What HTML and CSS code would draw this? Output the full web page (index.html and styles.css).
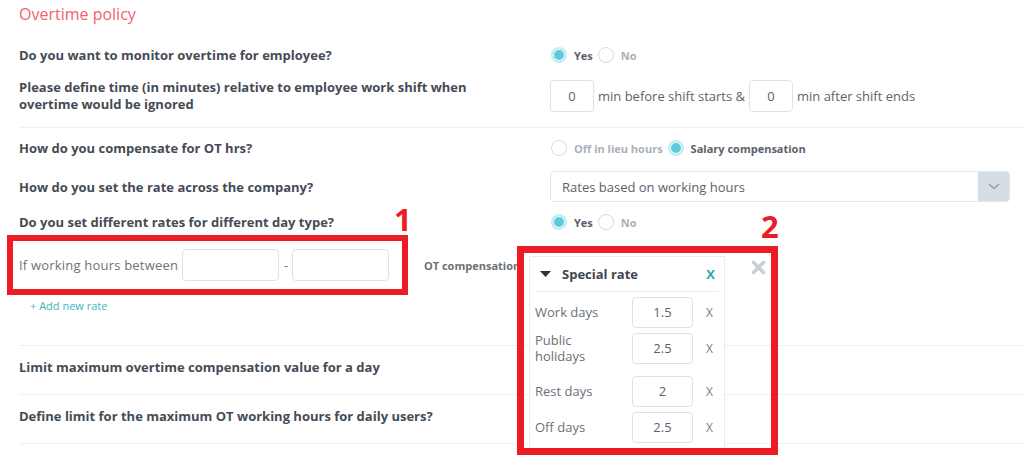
FILE: index.html
```html
<!DOCTYPE html>
<html lang="en">
<head>
  <meta charset="UTF-8" />
  <meta name="viewport" content="width=device-width, initial-scale=1.0" />
  <title>Overtime policy</title>
  <link rel="stylesheet" href="styles.css">
</head>
<body>
  <div class="policy">
    <h2 class="policy-title">Overtime policy</h2>

    <section class="block block-monitor">
      <div class="row row-monitor">
        <div class="question">Do you want to monitor overtime for employee?</div>
        <div class="answer">
          <label class="radio checked"><span class="dot"></span>Yes</label>
          <label class="radio"><span class="dot"></span>No</label>
        </div>
      </div>
      <div class="row row-ignore">
        <div class="question question-wrap">Please define time (in minutes) relative to employee work shift when overtime would be ignored</div>
        <div class="answer">
          <input class="field field-min" type="text" value="0">
          <span class="hint">min before shift starts &amp;</span>
          <input class="field field-min" type="text" value="0">
          <span class="hint">min after shift ends</span>
        </div>
      </div>
    </section>

    <section class="block block-rates">
      <div class="row row-comp">
        <div class="question">How do you compensate for OT hrs?</div>
        <div class="answer">
          <label class="radio"><span class="dot"></span>Off in lieu hours</label>
          <label class="radio checked"><span class="dot"></span>Salary compensation</label>
        </div>
      </div>
      <div class="row row-rate">
        <div class="question">How do you set the rate across the company?</div>
        <div class="answer">
          <div class="select">
            <span class="select-value">Rates based on working hours</span>
            <span class="select-btn">
              <svg width="12" height="7" viewBox="0 0 12 7"><polyline points="1,1 6,5.5 11,1" fill="none" stroke="#8f9ba5" stroke-width="1.4"/></svg>
            </span>
          </div>
        </div>
      </div>
      <div class="row row-daytype">
        <div class="question">Do you set different rates for different day type?</div>
        <div class="answer">
          <label class="radio checked"><span class="dot"></span>Yes</label>
          <label class="radio"><span class="dot"></span>No</label>
        </div>
      </div>
      <div class="hours-row">
        <span class="hours-label">If working hours between</span>
        <input class="field field-hours" type="text">
        <span class="dash">-</span>
        <input class="field field-hours" type="text">
        <span class="ot-label">OT compensation</span>
      </div>
      <a class="add-rate" href="#">+ Add new rate</a>
    </section>

    <section class="block block-line">
      <div class="question">Limit maximum overtime compensation value for a day</div>
    </section>
    <section class="block block-line">
      <div class="question">Define limit for the maximum OT working hours for daily users?</div>
    </section>

    <!-- special rate popover -->
    <div class="special">
      <div class="special-head">
        <svg class="caret" width="11" height="6" viewBox="0 0 11 6"><polygon points="0,0 11,0 5.5,6" fill="#2f3338"/></svg>
        <span class="special-title">Special rate</span>
        <span class="special-close">X</span>
      </div>
      <div class="rate-row">
        <span class="rate-label">Work days</span>
        <input class="field field-rate" type="text" value="1.5">
        <span class="rate-x">X</span>
      </div>
      <div class="rate-row two-line">
        <span class="rate-label">Public holidays</span>
        <input class="field field-rate" type="text" value="2.5">
        <span class="rate-x">X</span>
      </div>
      <div class="rate-row">
        <span class="rate-label">Rest days</span>
        <input class="field field-rate" type="text" value="2">
        <span class="rate-x">X</span>
      </div>
      <div class="rate-row">
        <span class="rate-label">Off days</span>
        <input class="field field-rate" type="text" value="2.5">
        <span class="rate-x">X</span>
      </div>
    </div>
    <svg class="remove" width="15" height="15" viewBox="0 0 15 15"><path d="M2.5 2.5 L12.5 12.5 M12.5 2.5 L2.5 12.5" stroke="#c6d0d6" stroke-width="3.6" stroke-linecap="round"/></svg>

    <!-- annotations -->
    <div class="mark mark-1"></div>
    <span class="mark-num num-1">1</span>
    <div class="mark mark-2"></div>
    <span class="mark-num num-2">2</span>
  </div>
</body>
</html>
```

FILE: styles.css
```css
body {
  margin: 0;
  height: 455px;
  overflow: hidden;
  background: #fff;
  font-family: 'Open Sans', 'DejaVu Sans', sans-serif;
  color: #454b55;
}
.policy {
  position: relative;
  padding: 0 0 0 19px;
}
.policy-title {
  margin: 0;
  padding-top: 4px;
  height: 20px;
  font-size: 16px;
  line-height: 20px;
  font-weight: 400;
  color: #f2616f;
}
.block {
  border-bottom: 1px solid #eef1f4;
}
.block-monitor {
  padding: 17px 0 14px;
}
.block-rates {
  padding: 6px 0 31px;
}
.block-line {
  padding: 13px 0 19px;
}
.row {
  display: grid;
  grid-template-columns: 531px 1fr;
  align-items: center;
  min-height: 28px;
}
.row-ignore {
  margin-top: 10px;
}
.row-rate {
  margin-top: 9px;
}
.row-daytype {
  margin-top: 6px;
}
.question {
  font-size: 13px;
  font-weight: 700;
  line-height: 16px;
  color: #454b55;
}
.question-wrap {
  max-width: 470px;
  line-height: 17px;
}
.answer {
  display: flex;
  align-items: center;
}
.radio {
  display: flex;
  align-items: center;
  font-size: 11px;
  font-weight: 700;
  color: #aab1b8;
  margin-right: 4px;
  cursor: pointer;
}
.radio.checked {
  color: #5b6169;
}
.dot {
  box-sizing: border-box;
  width: 16px;
  height: 16px;
  border-radius: 50%;
  border: 1px solid #d3dbe1;
  background: #fff;
  margin: 0 7px 0 1px;
}
.radio.checked .dot {
  border: 2px solid #c4ecf1;
  background: #5ccad8;
  box-shadow: inset 0 0 0 1px #fff;
}
.field {
  box-sizing: border-box;
  border: 1px solid #dbe2e8;
  border-radius: 4px;
  font-family: inherit;
  font-size: 13px;
  color: #5d636b;
  text-align: center;
  background: #fff;
  outline: none;
}
.field-min {
  width: 44px;
  height: 32px;
  margin-right: 4px;
}
.hint {
  font-size: 13px;
  color: #5d636b;
  margin-right: 4px;
}
.select {
  box-sizing: border-box;
  display: flex;
  align-items: center;
  width: 460px;
  height: 31px;
  border: 1px solid #e0e6eb;
  border-radius: 4px;
  overflow: hidden;
}
.select-value {
  flex: 1;
  padding-left: 11px;
  font-size: 13px;
  color: #5d636b;
}
.select-btn {
  display: flex;
  align-items: center;
  justify-content: center;
  width: 31px;
  height: 100%;
  background: #d6dee5;
}
.hours-row {
  display: flex;
  align-items: center;
  margin-top: 13px;
  height: 32px;
}
.hours-label {
  font-size: 13px;
  letter-spacing: 0.2px;
  color: #6d737b;
  margin-right: 4px;
}
.field-hours {
  width: 97px;
  height: 32px;
}
.dash {
  font-size: 12px;
  color: #6d737b;
  margin: 0 4px 0 5px;
}
.ot-label {
  margin-left: 35px;
  font-size: 11px;
  font-weight: 700;
  color: #6b7179;
}
.add-rate {
  display: block;
  margin: 17px 0 0 11px;
  font-size: 11px;
  line-height: 16px;
  color: #3fb3c4;
  text-decoration: none;
}
.special {
  position: absolute;
  left: 529px;
  top: 256px;
  box-sizing: border-box;
  width: 196px;
  height: 220px;
  padding: 0 5px;
  background: #fff;
  border: 1px solid #e8edf1;
}
.special-head {
  display: flex;
  align-items: center;
  height: 34px;
  border-bottom: 1px solid #eaeef2;
  margin-bottom: 2px;
}
.caret {
  margin: 0 11px 0 5px;
}
.special-title {
  flex: 1;
  font-size: 13px;
  font-weight: 700;
  color: #3f454e;
}
.special-close {
  margin-right: 4px;
  font-size: 13px;
  font-weight: 700;
  color: #2aa8ba;
}
.rate-row {
  display: flex;
  align-items: center;
  height: 36px;
}
.rate-row.two-line {
  margin-bottom: 7px;
}
.rate-label {
  width: 80px;
  margin-right: 17px;
  font-size: 13px;
  line-height: 16px;
  color: #6a7078;
}
.field-rate {
  width: 61px;
  height: 31px;
}
.rate-x {
  margin-left: 13px;
  font-size: 12px;
  color: #7a8088;
}
.remove {
  position: absolute;
  left: 751px;
  top: 260px;
}
.mark {
  position: absolute;
  box-sizing: border-box;
  border: 6px solid #ed1c24;
}
.mark-1 {
  left: 7px;
  top: 235px;
  width: 401px;
  height: 60px;
}
.mark-2 {
  left: 517px;
  top: 246px;
  width: 261px;
  height: 209px;
  border-width: 7px;
}
.mark-num {
  position: absolute;
  font-family: 'Open Sans', sans-serif;
  font-size: 31px;
  font-weight: 700;
  line-height: 1;
  color: #ed1c24;
}
.num-1 {
  left: 394px;
  top: 204px;
}
.num-2 {
  left: 761px;
  top: 211px;
}
```
